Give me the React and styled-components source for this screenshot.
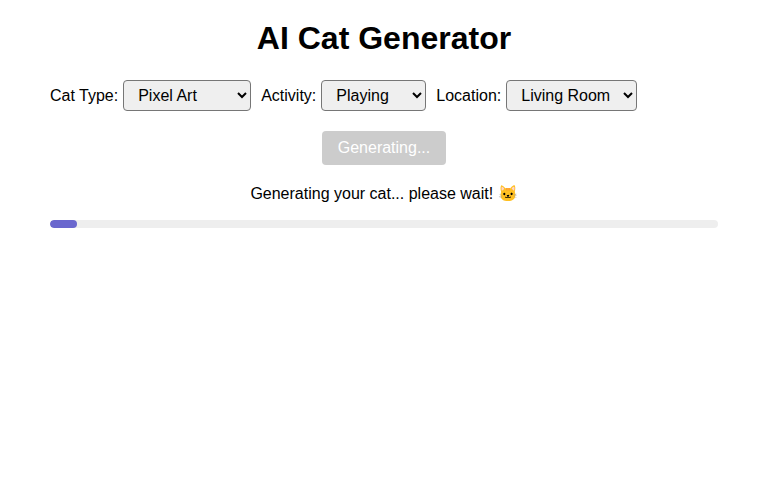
import styled, { createGlobalStyle } from "styled-components";

const GlobalStyle = createGlobalStyle`
  body {
    margin: 0;
    background: #fff;
    font-family: "Liberation Sans", Arial, sans-serif;
    color: #000;
  }
`;

const Container = styled.div`
  padding: 0 50px;
`;

const Title = styled.h1`
  font-size: 32px;
  font-weight: bold;
  text-align: center;
  margin: 20px 0 23px;
`;

const Controls = styled.div`
  display: flex;
  align-items: center;
  gap: 10px;
`;

const Field = styled.label`
  display: flex;
  align-items: center;
  gap: 5px;
  font-size: 16px;
`;

const Select = styled.select`
  width: ${(p) => p.$width}px;
  height: 31px;
  padding: 5px 10px;
  font-size: 16px;
  font-family: "Liberation Sans", Arial, sans-serif;
  border-radius: 4px;
`;

const Actions = styled.div`
  display: flex;
  justify-content: center;
  margin-top: 20px;
`;

const Button = styled.button`
  padding: 8px 16px;
  font-size: 16px;
  font-family: "Liberation Sans", Arial, sans-serif;
  background-color: #cccccc;
  color: #fff;
  border: none;
  border-radius: 4px;
  cursor: not-allowed;
`;

const Status = styled.p`
  text-align: center;
  font-size: 16px;
  margin: 19px 0 17px;
`;

const Track = styled.div`
  height: 8px;
  background-color: #eeeeee;
  border-radius: 4px;
  overflow: hidden;
`;

const Fill = styled.div`
  height: 100%;
  background-color: #6a67ce;
  border-radius: 4px;
`;

const App = () => {
  const progress = 4;
  return (
    <Container>
      <GlobalStyle />
      <Title>AI Cat Generator</Title>
      <Controls>
        <Field>
          Cat Type:
          <Select $width={128} defaultValue="pixel">
            <option value="pixel">Pixel Art</option>
            <option value="cartoon">Cartoon</option>
            <option value="real">Realistic</option>
          </Select>
        </Field>
        <Field>
          Activity:
          <Select $width={105} defaultValue="playing">
            <option value="playing">Playing</option>
            <option value="sleeping">Sleeping</option>
            <option value="eating">Eating</option>
          </Select>
        </Field>
        <Field>
          Location:
          <Select $width={131} defaultValue="living">
            <option value="living">Living Room</option>
            <option value="garden">Garden</option>
            <option value="kitchen">Kitchen</option>
          </Select>
        </Field>
      </Controls>
      <Actions>
        <Button disabled>Generating...</Button>
      </Actions>
      <Status>Generating your cat... please wait! 🐱</Status>
      <Track>
        <Fill style={{ width: `${progress}%` }} />
      </Track>
    </Container>
  );
};

export default App;
